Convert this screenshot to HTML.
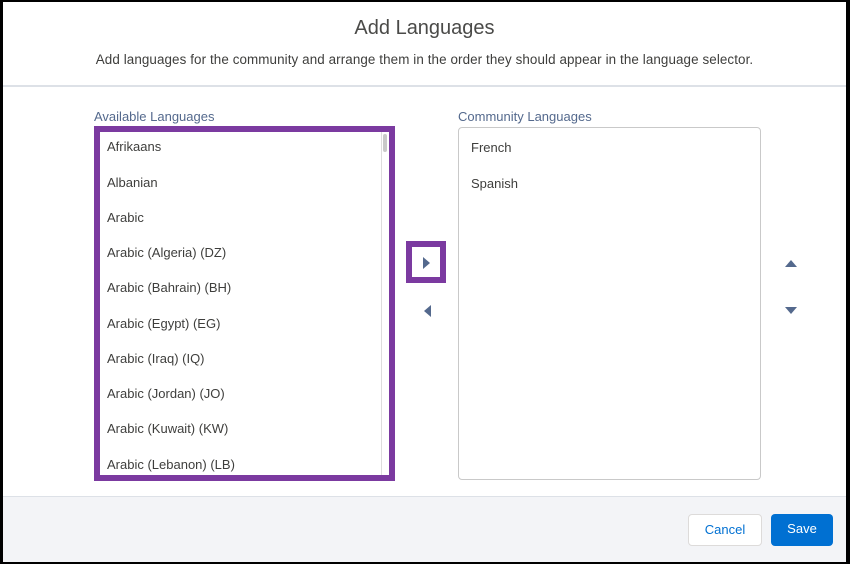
<!DOCTYPE html>
<html><head><style>
body{margin:0;width:850px;height:564px;overflow:hidden;font-family:"Liberation Sans",sans-serif;background:#000;}
.m{position:absolute;left:3px;top:2px;width:843px;height:559px;background:#fff;}
.h1{position:absolute;left:0;width:843px;top:15px;text-align:center;font-size:20px;color:#4a4a48;}
.sub{position:absolute;left:0;width:843px;top:50px;text-align:center;font-size:13.4px;letter-spacing:0.1px;color:#3e3e3c;}
.sep{position:absolute;left:0;top:83px;width:843px;height:2px;background:#dde1e7;}
.lbl{position:absolute;top:107px;font-size:13px;color:#54698d;}
.box{position:absolute;box-sizing:border-box;}
.it{position:absolute;left:7px;font-size:13px;color:#3e3e3c;}
.foot{position:absolute;left:0;top:494px;width:843px;height:65px;background:#f3f4f7;border-top:1px solid #dde1e7;}
.btn{position:absolute;box-sizing:border-box;border-radius:4px;font-size:13px;text-align:center;line-height:30px;}
</style></head><body><div class="m">
<div class="h1">Add Languages</div>
<div class="sub">Add languages for the community and arrange them in the order they should appear in the language selector.</div>
<div class="sep"></div>
<div class="lbl" style="left:91px">Available Languages</div>
<div class="lbl" style="left:455px">Community Languages</div>
<div class="box" style="left:91px;top:124px;width:301px;height:355px;border:6px solid #7b3aa0;background:#fff">
<div style="position:absolute;left:281px;top:0;width:1px;height:343px;background:#ddd"></div>
<div style="position:absolute;left:283px;top:2px;width:4px;height:18px;background:#c9c9c9;border-radius:2px"></div>
<div class="it" style="top:7px">Afrikaans</div>
<div class="it" style="top:43px">Albanian</div>
<div class="it" style="top:78px">Arabic</div>
<div class="it" style="top:113px">Arabic (Algeria) (DZ)</div>
<div class="it" style="top:148px">Arabic (Bahrain) (BH)</div>
<div class="it" style="top:184px">Arabic (Egypt) (EG)</div>
<div class="it" style="top:219px">Arabic (Iraq) (IQ)</div>
<div class="it" style="top:254px">Arabic (Jordan) (JO)</div>
<div class="it" style="top:289px">Arabic (Kuwait) (KW)</div>
<div class="it" style="top:325px">Arabic (Lebanon) (LB)</div>
</div>
<div class="box" style="left:455px;top:125px;width:303px;height:353px;border:1px solid #c9c9c9;border-radius:4px">
<div class="it" style="left:12px;top:12px">French</div>
<div class="it" style="left:12px;top:48px">Spanish</div>
</div>
<div class="box" style="left:403px;top:239px;width:40px;height:42px;border:6px solid #7b3aa0;background:#fff"></div>
<svg style="position:absolute;left:0;top:0" width="843" height="559">
<polygon points="420,255 420,267 427,261" fill="#54698d"/>
<polygon points="428,303 428,315 421,309" fill="#54698d"/>
<polygon points="782,265 794,265 788,258" fill="#54698d"/>
<polygon points="782,305 794,305 788,312" fill="#54698d"/>
</svg>
<div class="foot"></div>
<div class="btn" style="left:685px;top:512px;width:74px;height:32px;background:#fff;border:1px solid #dddbda;color:#0070d2">Cancel</div>
<div class="btn" style="left:768px;top:512px;width:62px;height:32px;background:#0070d2;color:#fff">Save</div>
</div></body></html>
